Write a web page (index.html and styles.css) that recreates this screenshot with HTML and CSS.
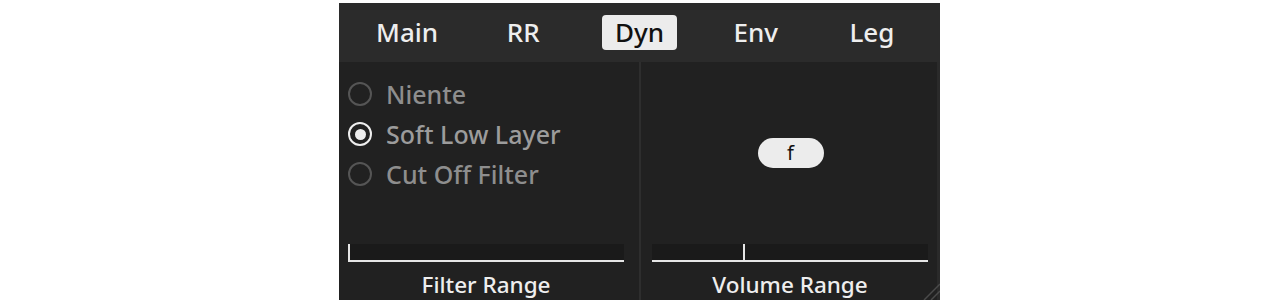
FILE: index.html
```html
<!DOCTYPE html>
<html lang="en">
<head>
    <meta charset="UTF-8">
    <title>Dyn</title>
    <link rel="stylesheet" href="styles.css">
</head>
<body>

    <div class="panel">
        <div class="tabs">
            <div class="tab"><span>Main</span></div>
            <div class="tab"><span>RR</span></div>
            <div class="tab"><span class="active">Dyn</span></div>
            <div class="tab"><span>Env</span></div>
            <div class="tab"><span>Leg</span></div>
        </div>

        <div class="content">
            <div class="column left">
                <div class="options">
                    <div class="option"><span class="radio"></span>Niente</div>
                    <div class="option selected"><span class="radio"></span>Soft Low Layer</div>
                    <div class="option"><span class="radio"></span>Cut Off Filter</div>
                </div>
                <div class="range filter">
                    <div class="bar"></div>
                    <div class="label">Filter Range</div>
                </div>
            </div>

            <div class="column right">
                <div class="pill">f</div>
                <div class="range volume">
                    <div class="bar"><div class="tick" style="left: 33%"></div></div>
                    <div class="label">Volume Range</div>
                </div>
            </div>
        </div>

        <svg class="grip" width="18" height="18" viewBox="0 0 18 18">
            <line x1="2" y1="18" x2="18" y2="2" stroke="#4a4a4a" stroke-width="1.5"/>
            <line x1="9" y1="18" x2="18" y2="9" stroke="#4a4a4a" stroke-width="1.5"/>
        </svg>
    </div>

</body>
</html>
```

FILE: styles.css
```css
/* Dyn page panel */
body {
    margin: 0;
    background: #fff;
    font-family: "Noto Sans", "Open Sans", sans-serif;
}

.panel {
    position: relative;
    width: 601px;
    height: 297px;
    margin: 3px 0 0 339px;
    background: #212121;
    box-shadow: inset -3px 0 0 #2a2a2a;
    overflow: hidden;
}

.tabs {
    display: flex;
    height: 59px;
    padding: 0 10px 2px;
    box-sizing: border-box;
    background: #2b2b2b;
    align-items: center;
}

.tab {
    flex: 1;
    text-align: center;
    font-size: 26px;
    font-weight: 500;
    color: #eee;
}

.tab span {
    display: inline-block;
    padding: 0 13px;
    line-height: 35px;
    border-radius: 4px;
}

.tab .active {
    background: #ececec;
    color: #111;
}

.content {
    display: flex;
    height: 238px;
}

.column {
    display: flex;
    flex-direction: column;
}

.left {
    width: 300px;
    border-right: 2px solid #2e2e2e;
}

.right {
    flex: 1;
}

.options {
    padding: 12px 0 0 9px;
}

.option {
    display: flex;
    align-items: center;
    height: 40px;
    font-size: 25px;
    font-weight: 500;
    color: #8e8e8e;
}

.option.selected {
    color: #9c9c9c;
}

.radio {
    width: 20px;
    height: 20px;
    margin-right: 14px;
    border: 2px solid #555;
    border-radius: 50%;
    display: flex;
    align-items: center;
    justify-content: center;
}

.selected .radio {
    border-color: #eee;
}

.selected .radio::after {
    content: "";
    width: 11px;
    height: 11px;
    border-radius: 50%;
    background: #eee;
}

.range {
    margin-top: auto;
}

.filter {
    padding: 0 15px 0 9px;
}

.volume {
    padding: 0 12px 0 11px;
}

.bar {
    position: relative;
    height: 16px;
    background: #1a1a1a;
    border-bottom: 2px solid #e6e6e6;
}

.filter .bar {
    border-left: 2px solid #e6e6e6;
}

.tick {
    position: absolute;
    top: 0;
    bottom: 0;
    width: 2px;
    background: #e6e6e6;
}

.label {
    text-align: center;
    font-size: 22.5px;
    font-weight: 500;
    color: #eee;
    line-height: 30px;
    margin-top: 8px;
    height: 30px;
}

.pill {
    align-self: center;
    margin-top: 76px;
    width: 66px;
    height: 30px;
    line-height: 30px;
    border-radius: 15px;
    background: #ececec;
    color: #111;
    text-align: center;
    font-size: 20px;
}

.grip {
    position: absolute;
    right: 0;
    bottom: 0;
}
```
